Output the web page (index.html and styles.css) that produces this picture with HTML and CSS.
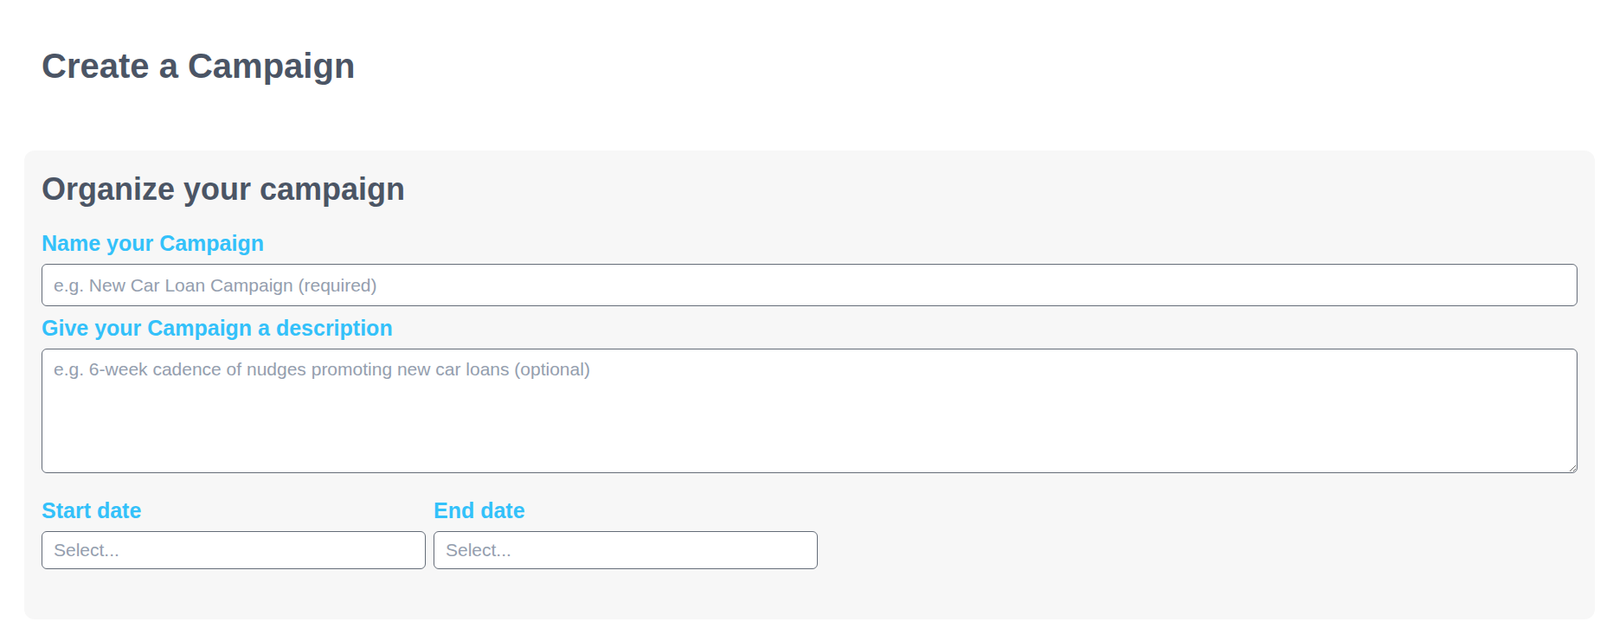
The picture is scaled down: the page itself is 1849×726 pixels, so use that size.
FILE: index.html
```html
<!DOCTYPE html>
<html lang="en">
<head>
<meta charset="utf-8">
<title>Create a Campaign</title>
<link rel="stylesheet" href="styles.css">
</head>
<body>
<main class="page">
  <h1 class="page-title">Create a Campaign</h1>
  <section class="panel">
    <h2 class="panel-title">Organize your campaign</h2>
    <label class="field-label" for="name">Name your Campaign</label>
    <input class="field-input" id="name" type="text" placeholder="e.g. New Car Loan Campaign (required)">
    <label class="field-label" for="desc">Give your Campaign a description</label>
    <textarea class="field-textarea" id="desc" placeholder="e.g. 6-week cadence of nudges promoting new car loans (optional)"></textarea>
    <div class="date-row">
      <div class="date-col">
        <label class="field-label" for="start">Start date</label>
        <input class="field-input date-input" id="start" type="text" placeholder="Select...">
      </div>
      <div class="date-col">
        <label class="field-label" for="end">End date</label>
        <input class="field-input date-input" id="end" type="text" placeholder="Select...">
      </div>
    </div>
  </section>
</main>
</body>
</html>
```
FILE: styles.css
```css
* { box-sizing: border-box; }
html, body { margin: 0; padding: 0; background: #ffffff; }
body { font-family: "Liberation Sans", Arial, sans-serif; }

.page {
  padding: 53px 6px 0 28px;
}

.page-title {
  margin: 0 0 75px 20px;
  font-size: 40px;
  line-height: 46px;
  font-weight: 700;
  color: #4b5565;
}

.panel {
  width: 1815px;
  background: #f7f7f7;
  border-radius: 12px;
  padding: 24px 20px 58px 20px;
  display: flex;
  flex-direction: column;
}

.panel-title {
  margin: 0 0 27.5px 0;
  font-size: 36px;
  line-height: 41px;
  font-weight: 700;
  color: #4b5565;
}

.field-label {
  display: block;
  font-size: 25px;
  line-height: 29px;
  font-weight: 700;
  color: #33c1fa;
  margin-bottom: 9.5px;
}

.field-input,
.field-textarea {
  display: block;
  width: 100%;
  font-family: "Liberation Sans", Arial, sans-serif;
  font-size: 21px;
  line-height: 24px;
  color: #374151;
  background: #ffffff;
  border: 1px solid #646c78;
  border-radius: 6px;
  padding: 12px 13px;
  outline: none;
}

.field-input { height: 49px; margin-bottom: 10.5px; }

.field-textarea {
  height: 144px;
  resize: vertical;
  padding-top: 11px;
}

.field-input::placeholder,
.field-textarea::placeholder { color: #949eae; opacity: 1; }

.date-row {
  display: grid;
  grid-template-columns: 444px 444px;
  column-gap: 9px;
  margin-top: 28.5px;
}

.date-input {
  height: 44px;
  padding: 9px 13px;
  margin-bottom: 0;
}
```
